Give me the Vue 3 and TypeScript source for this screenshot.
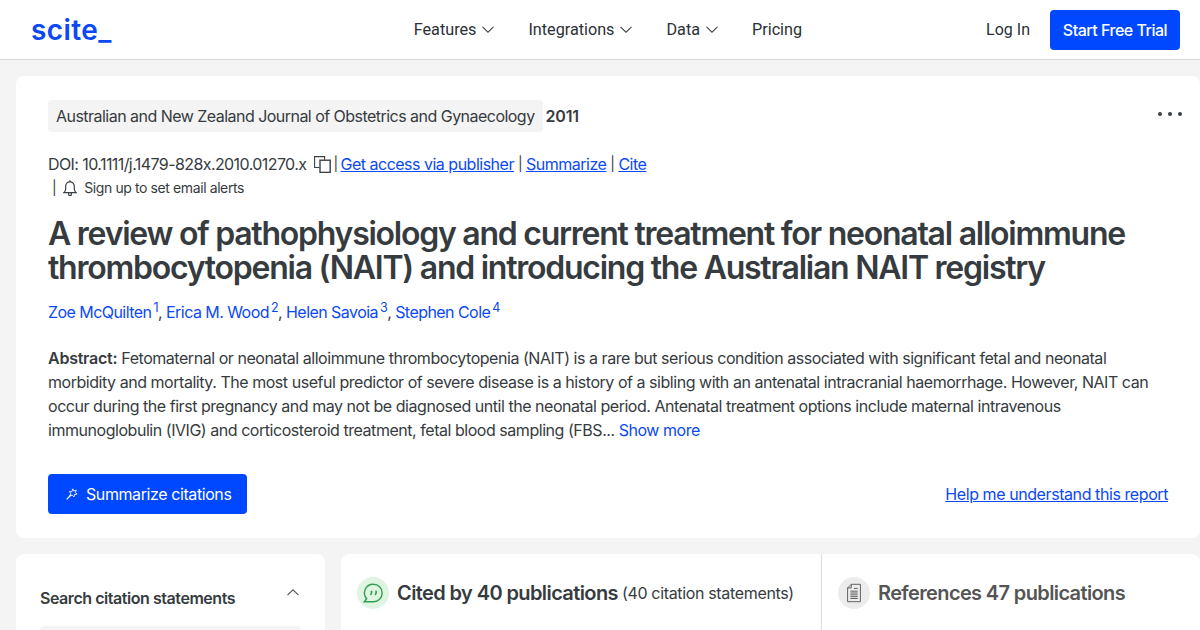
<script setup lang="ts">
const nav: { label: string; caret: boolean }[] = [
  { label: 'Features', caret: true },
  { label: 'Integrations', caret: true },
  { label: 'Data', caret: true },
  { label: 'Pricing', caret: false },
]
const authors: { name: string; sup: number }[] = [
  { name: 'Zoe McQuilten', sup: 1 },
  { name: 'Erica M. Wood', sup: 2 },
  { name: 'Helen Savoia', sup: 3 },
  { name: 'Stephen Cole', sup: 4 },
]
</script>

<template>
  <div class="page">
    <header class="topbar">
      <div class="logo">scite_</div>
      <nav class="nav">
        <a v-for="n in nav" :key="n.label" class="nav-item">
          {{ n.label }}
          <svg v-if="n.caret" class="caret" viewBox="0 0 12 7" fill="none" stroke="currentColor" stroke-width="1.1"><path d="M.5 .8l5.5 5.4 5.5-5.4" /></svg>
        </a>
      </nav>
      <div class="auth">
        <a class="login">Log In</a>
        <button class="trial">Start Free Trial</button>
      </div>
    </header>

    <main class="content">
      <section class="card paper">
        <button class="more" aria-label="More"><i></i><i></i><i></i></button>
        <div class="journal-row">
          <span class="journal">Australian and New Zealand Journal of Obstetrics and Gynaecology</span>
          <strong class="year">2011</strong>
        </div>
        <div class="doi-row">
          <span>DOI: 10.1111/j.1479-828x.2010.01270.x</span>
          <svg class="copy" viewBox="0 0 17 17" fill="none" stroke="#3a4047" stroke-width="1.1">
            <path d="M5.5 11.5H.6V.6h10v3.2" />
            <rect x="6" y="4.2" width="10.2" height="12.2" stroke-width="1.4" />
          </svg>
          <span class="sep">|</span>
          <a class="link">Get access via publisher</a>
          <span class="sep gap">|</span>
          <a class="link">Summarize</a>
          <span class="sep gap">|</span>
          <a class="link">Cite</a>
        </div>
        <div class="alert-row">
          <span class="bar">|</span>
          <svg class="bell" viewBox="0 0 14 16" fill="none" stroke="#3a4047" stroke-width="1.2">
            <path d="M.8 12.7c1.3-1 1.9-2 1.9-4V6.2a4.3 4.3 0 0 1 8.6 0v2.5c0 2 .6 3 1.9 4H.8z" />
            <path d="M5.6 13v1.2a1.4 1.4 0 0 0 2.8 0V13M7 .3v1.6" />
          </svg>
          <span>Sign up to set email alerts</span>
        </div>
        <h1 class="title">A review of pathophysiology and current treatment for neonatal alloimmune thrombocytopenia (NAIT) and introducing the Australian NAIT registry</h1>
        <div class="authors">
          <template v-for="(a, i) in authors" :key="a.name">
            <a class="author">{{ a.name }}<sup>{{ a.sup }}</sup></a><span v-if="i < authors.length - 1">, </span>
          </template>
        </div>
        <p class="abstract"><strong>Abstract:</strong> Fetomaternal or neonatal alloimmune thrombocytopenia (NAIT) is a rare but serious condition associated with significant fetal and neonatal morbidity and mortality. The most useful predictor of severe disease is a history of a sibling with an antenatal intracranial haemorrhage. However, NAIT can occur during the first pregnancy and may not be diagnosed until the neonatal period. Antenatal treatment options include maternal intravenous immunoglobulin (IVIG) and corticosteroid treatment, fetal blood sampling (FBS... <a class="show">Show more</a></p>
        <div class="actions">
          <button class="summarize">
            <svg class="wand" viewBox="0 0 14 14" fill="none" stroke="#fff" stroke-width="1">
              <path d="M.8 13.2l5-5" stroke-width="1.4" />
              <path d="M8 1l.9 2.4 3.3-.7-1.5 2.6 2.3 1.8-3.1.5-.6 2.8-2.2-2.1-2.5.8.9-2.9L4 4.2l2.9.1z" />
            </svg>
            Summarize citations
          </button>
          <a class="link help">Help me understand this report</a>
        </div>
      </section>

      <div class="lower">
        <aside class="card side">
          <div class="side-head">
            <h2>Search citation statements</h2>
            <svg class="up" viewBox="0 0 12 7" fill="none" stroke="#555" stroke-width="1.1"><path d="M.5 6.2L6 .8l5.5 5.4" /></svg>
          </div>
          <div class="search-box"></div>
        </aside>
        <section class="card tabs">
          <div class="tab cited">
            <span class="badge green">
              <svg viewBox="0 0 24 24" fill="none" stroke="#2f9e4f" stroke-width="1.5">
                <path d="M12.5 2.5a9.5 9.5 0 0 1 0 19H2.5l2.6-3.2A9.5 9.5 0 0 1 12.5 2.5z" />
                <path d="M10.4 9.6v2.2c0 1-.5 1.8-1.3 2.3M15.4 9.6v2.2c0 1-.5 1.8-1.3 2.3" stroke-width="1.8" />
              </svg>
            </span>
            <span class="tab-title">Cited by 40 publications</span>
            <span class="tab-sub">(40 citation statements)</span>
          </div>
          <div class="tab refs">
            <span class="badge grey">
              <svg viewBox="0 0 24 24" fill="none" stroke="#555" stroke-width="1">
                <path d="M9 2.5h10v19H5V6.5z" />
                <path d="M9 2.5v4H5M12 7h4M8 10h8M8 12h8M8 14h8M8 16h8M8 18h8" />
              </svg>
            </span>
            <span class="tab-title">References 47 publications</span>
          </div>
        </section>
      </div>
    </main>
  </div>
</template>

<style>
html, body { margin: 0; background: #f4f4f4; }
</style>

<style scoped>
.page {
  width: 1200px;
  height: 630px;
  overflow: hidden;
  background: #f4f4f4;
  font-family: Inter, "Noto Sans", sans-serif;
  color: #363b40;
  font-size: 16px;
}
.topbar {
  height: 59px;
  background: #fff;
  border-bottom: 1px solid #d9d9d9;
  display: flex;
  align-items: center;
  justify-content: space-between;
  padding: 0 20px 0 31px;
  position: relative;
}
.logo {
  font-size: 28px;
  font-weight: 600;
  color: #0b49f5;
  letter-spacing: 0.4px;
}
.nav {
  display: flex;
  gap: 34px;
  margin-left: 118px;
}
.nav-item {
  display: flex;
  align-items: center;
  gap: 6px;
  font-family: Roboto, sans-serif;
  font-size: 16.2px;
  color: #2b3036;
}
.caret { width: 12px; height: 7px; color: #3f444a; }
.auth { display: flex; align-items: center; gap: 20px; }
.login { font-family: Roboto, sans-serif; color: #2b3036; }
.trial {
  height: 40px;
  width: 130px;
  border: 0;
  border-radius: 4px;
  background: #0048ff;
  color: #fff;
  font: 500 16px Inter, sans-serif;
  letter-spacing: -0.49px;
  padding: 0;
}
.content { padding: 16px 0 0 16px; display: flex; flex-direction: column; gap: 16px; }
.card { background: #fff; border-radius: 8px; }
.paper {
  height: 462px;
  box-sizing: border-box;
  padding: 24px 32px 0;
  position: relative;
}
.more {
  position: absolute;
  top: 36px;
  right: 18px;
  display: flex;
  gap: 6px;
  border: 0;
  padding: 0;
  background: none;
}
.more i { width: 4px; height: 4px; border-radius: 50%; background: #3a4047; }
.journal-row { display: flex; align-items: center; gap: 3px; }
.journal {
  background: #f4f4f4;
  border-radius: 4px;
  padding: 0 8px;
  line-height: 32px;
  letter-spacing: -0.53px;
}
.year { font-weight: 600; letter-spacing: -0.25px; }
.doi-row {
  margin-top: 20px;
  display: flex;
  align-items: center;
  line-height: 24px;
  letter-spacing: -0.58px;
  white-space: pre;
}
.copy { width: 17px; height: 17px; margin-left: 8px; }
.sep { font-size: 14px; margin-left: 2px; margin-right: 3px; }
.sep.gap { margin-left: 4px; margin-right: 4px; }
.link { color: #0b49f5; text-decoration: underline; letter-spacing: -0.5px; }
.alert-row {
  display: flex;
  align-items: center;
  font-size: 14px;
  letter-spacing: -0.4px;
  line-height: 24px;
  margin-top: 0;
}
.bar { margin-left: 4px; }
.bell { width: 14px; height: 16px; margin: 0 7px 0 7px; }
.title {
  margin: 17px 0 0;
  font-size: 32px;
  line-height: 34px;
  font-weight: 600;
  letter-spacing: -1.25px;
  color: #363b40;
}
.authors { margin-top: 15px; line-height: 24px; letter-spacing: -0.55px; white-space: pre; }
.author { color: #0b49f5; }
.author sup { font-size: 12.5px; line-height: 0; margin-left: 2px; }
.abstract {
  margin: 22px 0 0;
  line-height: 24px;
  letter-spacing: -0.46px;
  width: 1120px;
}
.abstract strong { font-weight: 600; letter-spacing: -0.25px; }
.show { color: #0b49f5; }
.actions {
  margin-top: 32px;
  display: flex;
  align-items: center;
  justify-content: space-between;
}
.summarize {
  height: 40px;
  width: 199px;
  border: 0;
  border-radius: 4px;
  background: #0048ff;
  color: #fff;
  font: 400 16px Inter, sans-serif;
  letter-spacing: -0.41px;
  display: flex;
  align-items: center;
  gap: 8px;
  padding: 0 0 0 18px;
}
.wand { width: 12px; height: 12px; }
.help { letter-spacing: -0.42px; }
.lower { display: flex; gap: 16px; align-items: stretch; }
.side { width: 309px; height: 100px; box-sizing: border-box; padding: 32px 24px 0; }
.side-head { display: flex; justify-content: space-between; align-items: flex-start; }
.side h2 { margin: 0; font-size: 16px; line-height: 24px; font-weight: 600; letter-spacing: -0.45px; }
.up { width: 12px; height: 7px; margin: 3px 2px 0 0; }
.search-box { margin-top: 16px; height: 40px; background: #f4f4f4; border-radius: 4px; }
.tabs { flex: 1; display: flex; height: 100px; }
.tab { display: flex; align-items: flex-start; padding-top: 23px; box-sizing: border-box; }
.cited { width: 481px; padding-left: 16px; border-right: 1px solid #dedede; }
.refs { flex: 1; padding-left: 16px; color: #555; }
.badge {
  width: 32px;
  height: 32px;
  border-radius: 50%;
  display: flex;
  align-items: center;
  justify-content: center;
  margin-right: 8px;
}
.badge svg { width: 22px; height: 22px; }
.green { background: #e0f4e2; }
.grey { background: #ececec; }
.tab-title { font-size: 20px; line-height: 32px; font-weight: 600; letter-spacing: -0.6px; }
.refs .tab-title { letter-spacing: -0.63px; }
.tab-sub { font-size: 16px; line-height: 32px; margin-left: 4px; letter-spacing: -0.34px; }
</style>
